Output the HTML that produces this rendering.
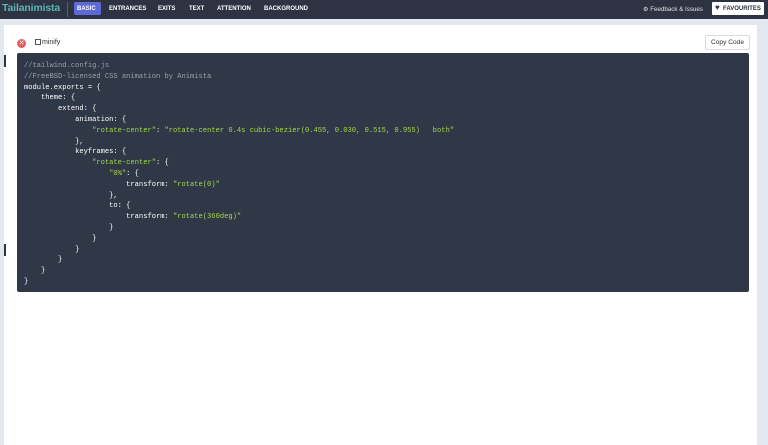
<!DOCTYPE html>
<html><head><meta charset="utf-8"><style>
*{margin:0;padding:0;box-sizing:border-box}
body{width:768px;height:441px;background:#e3e7ee;font-family:"Liberation Sans",sans-serif;position:relative;overflow:hidden}
.nav{position:absolute;left:0;top:0;width:768px;height:19px;background:#2d3342}
.logo{position:absolute;left:2px;top:3px;font-size:10.4px;font-weight:bold;color:#5fb3b9;letter-spacing:-0.1px}
.sep{position:absolute;left:67px;top:2px;width:1px;height:15px;background:#5b6070}
.mi{position:absolute;top:6px;font-size:6px;font-weight:bold;color:#fff}
.pill{position:absolute;left:74px;top:2px;width:27px;height:13px;background:#5b6ad6;border-radius:2px}
.fb{position:absolute;left:643px;top:5.5px;font-size:6.2px;color:#dfe3ea}
.fav{position:absolute;left:712px;top:2px;width:52px;height:13px;background:#fff;border-radius:1px;font-size:6px;font-weight:bold;color:#2d3342;padding:3.5px 0 0 11px;white-space:nowrap}
.panel{position:absolute;left:4px;top:25px;width:753px;height:420px;background:#fff}
.x{position:absolute;left:17px;top:39px;width:9px;height:9px;border-radius:50%;background:#e25d5d;color:#fff;font-size:7px;line-height:9px;text-align:center}
.min{position:absolute;left:35px;top:39px;font-size:7px;color:#333}
.min i{display:inline-block;width:6px;height:6px;border:1px solid #555;margin-right:1px;vertical-align:-1px}
.copy{position:absolute;left:705px;top:35px;width:45px;height:15px;border:1px solid #d7dbe2;border-radius:2px;font-size:6.6px;color:#333;text-align:center;line-height:13px}
.code{position:absolute;left:17px;top:53px;width:732px;height:239px;background:#303747;border-radius:2px}
pre{position:absolute;left:24px;top:61px;font-family:"Liberation Mono",monospace;font-size:7.1px;line-height:10.8px;color:#fff}
.c{color:#9aa1ad}.s{color:#a3d84a}
.bar{position:absolute;left:4px;width:2px;background:#2d3342}
</style></head><body>
<div class="nav">
<div class="logo">Tailanimista</div><div class="sep"></div>
<div class="pill"></div>
<div class="mi" style="left:77px">BASIC</div>
<div class="mi" style="left:109px">ENTRANCES</div>
<div class="mi" style="left:158px">EXITS</div>
<div class="mi" style="left:189px">TEXT</div>
<div class="mi" style="left:217px">ATTENTION</div>
<div class="mi" style="left:264px">BACKGROUND</div>
<div class="fb">⚙ Feedback &amp; Issues</div>
<div class="fav"><span style="position:absolute;left:3px;top:1px;font-size:8px">♥</span>FAVOURITES</div>
</div>
<div class="panel"></div>
<div class="bar" style="top:55px;height:12px"></div>
<div class="bar" style="top:244px;height:12px"></div>
<div class="x">✕</div>
<div class="min"><i></i>minify</div>
<div class="copy">Copy Code</div>
<div class="code"></div>
<pre><span class="c">//tailwind.config.js
//FreeBSD-licensed CSS animation by Animista</span>
module.exports = {
    theme: {
        extend: {
            animation: {
                <span class="s">"rotate-center"</span>: <span class="s">"rotate-center 0.4s cubic-bezier(0.455, 0.030, 0.515, 0.955)   both"</span>
            },
            keyframes: {
                <span class="s">"rotate-center"</span>: {
                    <span class="s">"0%"</span>: {
                        transform: <span class="s">"rotate(0)"</span>
                    },
                    to: {
                        transform: <span class="s">"rotate(360deg)"</span>
                    }
                }
            }
        }
    }
}</pre>
</body></html>
